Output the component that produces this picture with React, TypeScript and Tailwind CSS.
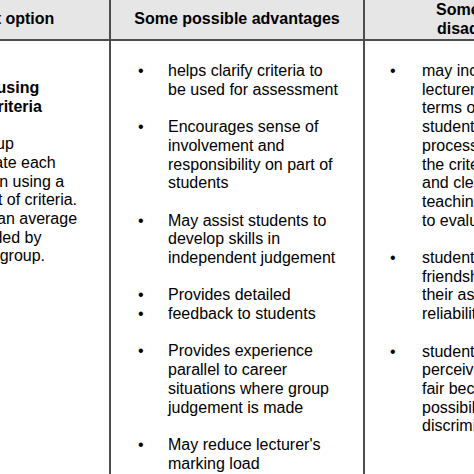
const advantages: { text: string; gap: boolean }[] = [
  { text: "helps clarify criteria to be used for assessment", gap: true },
  { text: "Encourages sense of involvement and responsibility on part of students", gap: true },
  { text: "May assist students to develop skills in independent judgement", gap: true },
  { text: "Provides detailed", gap: false },
  { text: "feedback to students", gap: true },
  { text: "Provides experience parallel to career situations where group judgement is made", gap: true },
  { text: "May reduce lecturer's marking load", gap: false },
];

const disadvantages: string[][] = [
  [
    "may increase",
    "lecturer workload in",
    "terms of preparing",
    "students for the",
    "process, explaining",
    "the criteria",
    "and clearly",
    "teaching students how",
    "to evaluate peers",
  ],
  ["students' own", "friendships may affect", "their assessments and", "reliability"],
  ["students may", "perceive it as not", "fair because of the", "possibility of", "discrimination"],
];

const optionLines = [
  "Members of the group",
  "anonymously evaluate each",
  "student's contribution using a",
  "jointly developed set of criteria.",
  "The overall mark is an average",
  "of every mark awarded by",
  "the members of the group.",
];

export default function App() {
  return (
    <div className="w-[474px] h-[474px] overflow-hidden bg-white text-black font-['Liberation_Sans',Arial,sans-serif] text-[16px] leading-[18.7px]">
      <div className="-ml-[150px] w-[770px] grid grid-cols-[261px_254px_255px]">
        {/* header */}
        <div className="h-[41px] bg-[#e6e6e6] border-b-2 border-r-2 border-[#4d4d4d] flex items-center justify-center pl-[2px] font-bold">
          Assessment option
        </div>
        <div className="h-[41px] bg-[#e6e6e6] border-b-2 border-r-2 border-[#4d4d4d] flex items-center justify-center font-bold">
          Some possible advantages
        </div>
        <div className="h-[41px] bg-[#e6e6e6] border-b-2 border-[#4d4d4d] flex items-center justify-center text-center font-bold">
          Some possible
          <br />
          disadvantages
        </div>

        {/* body */}
        <div className="h-[440px] border-r-2 border-[#4d4d4d] pl-[7.4px] pt-[38px]">
          <p className="font-bold whitespace-nowrap pl-[4px]">
            Peer assessment using
            <br />
            mutually agreed criteria
          </p>
          <p className="mt-[18.7px] whitespace-nowrap">
            {optionLines.map((l) => (
              <span key={l} className="block">
                {l}
              </span>
            ))}
          </p>
        </div>

        <div className="h-[440px] border-r-2 border-[#4d4d4d] pl-[27px] pt-[21px]">
          <ul>
            {advantages.map((a) => (
              <li key={a.text} className={`flex ${a.gap ? "mb-[18.7px]" : ""}`}>
                <span className="w-[30px] shrink-0">•</span>
                <span className="w-[174px]">{a.text}</span>
              </li>
            ))}
          </ul>
        </div>

        <div className="h-[440px] pl-[25px] pt-[21px]">
          <ul>
            {disadvantages.map((item) => (
              <li key={item[0]} className="flex mb-[18.7px]">
                <span className="w-[32px] shrink-0">•</span>
                <span className="whitespace-nowrap">
                  {item.map((l) => (
                    <span key={l} className="block">
                      {l}
                    </span>
                  ))}
                </span>
              </li>
            ))}
          </ul>
        </div>
      </div>
    </div>
  );
}
